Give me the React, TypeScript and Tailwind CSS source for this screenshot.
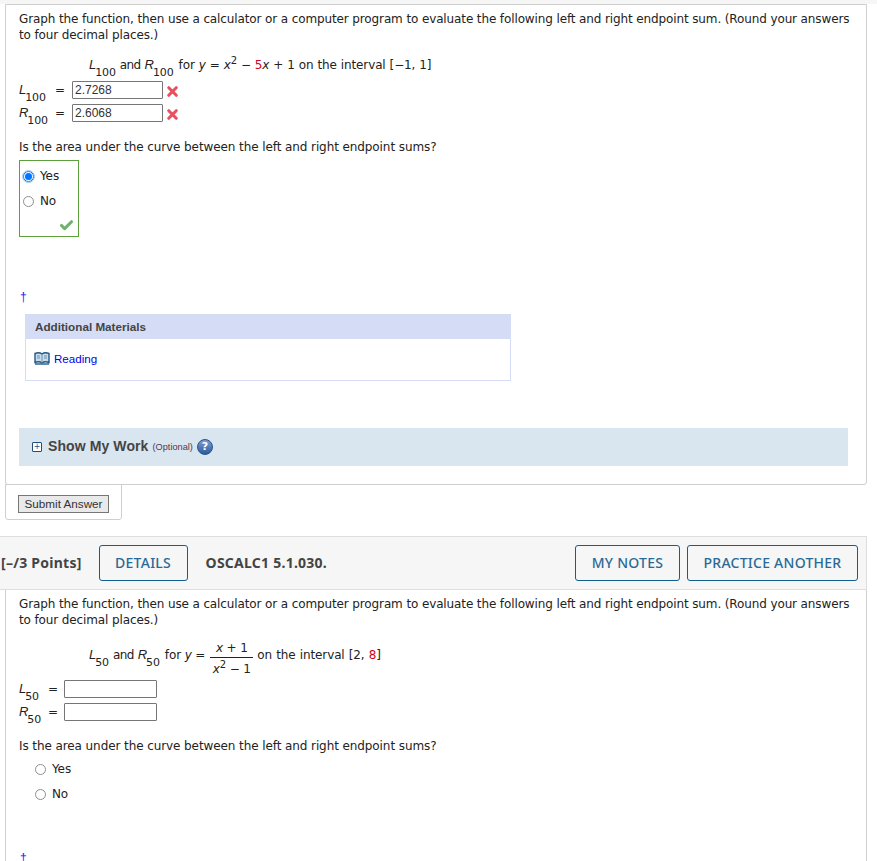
import { Check, X } from "lucide-react"

const body = "font-['DejaVu_Sans',sans-serif] text-[12px] tracking-[-0.12px]"

function Sub({ base, sub }: { base: string; sub: string }) {
  return (
    <span className="inline-flex items-start whitespace-nowrap">
      <i className="font-['Liberation_Sans',sans-serif] text-[13px]">{base}</i>
      <span className="relative top-[11px] -ml-[1px] text-[11px] leading-[14px] tracking-[-0.1px]">{sub}</span>
    </span>
  )
}

function Radio({ checked }: { checked?: boolean }) {
  return (
    <span className={`flex w-[11px] h-[11px] rounded-full border items-center justify-center bg-white ${checked ? "border-[#0075ff] outline outline-1 outline-[#9cc6f5]" : "border-[#8f8f8f]"}`}>
      {checked && <span className="w-[7px] h-[7px] rounded-full bg-[#0075ff]" />}
    </span>
  )
}

function Intro() {
  return (
    <p className="leading-[16px]">
      Graph the function, then use a calculator or a computer program to evaluate the following left and right endpoint sum. (Round your answers
      <br />
      to four decimal places.)
    </p>
  )
}

function AnswerRow({ base, sub, value, wide, wrong }: { base: string; sub: string; value?: string; wide: boolean; wrong?: boolean }) {
  return (
    <div className="flex h-[23px] items-center">
      <span className={wide ? "w-[33px]" : "w-[26px]"}>
        <Sub base={base} sub={sub} />
      </span>
      <span className={wide ? "w-[20px] pl-[3px]" : "w-[19px] pl-[3px]"}>=</span>
      <span className={`flex h-[18px] items-center border border-[#767676] rounded-[1px] bg-white pl-[2px] font-['Liberation_Sans',sans-serif] text-[12px] tracking-normal text-[#333] ${wide ? "w-[91px]" : "w-[93px]"}`}>
        {value}
      </span>
      {wrong && <X size={15} strokeWidth={5} className="ml-[2px] mt-[3px] text-[#e9505f]" />}
    </div>
  )
}

function Question({ children }: { children: React.ReactNode }) {
  return <p className="leading-[16px] tracking-[-0.09px]">{children}</p>
}

function OutlineButton({ children, width }: { children: string; width: string }) {
  return (
    <button className={`h-[36px] pb-[2px] rounded-[3px] border border-[#0f5f8f] text-[#2a6a96] font-['Noto_Sans',sans-serif] font-medium text-[14px] tracking-[0.25px] ${width}`}>
      {children}
    </button>
  )
}

export default function App() {
  return (
    <div className={`relative w-[877px] h-[861px] overflow-hidden bg-white text-[#222] ${body}`}>
      <div className="h-[4px] bg-[#f6f6f6]" />

      {/* First question */}
      <div className="ml-[5px] w-[862px] h-[481px] border border-[#cfcfcf] rounded-b-[3px] pl-[13px]">
        <div className="pt-[6px]">
          <Intro />
        </div>
        <div className="flex h-[24px] items-center mt-[10px] ml-[70px] gap-[4px] whitespace-nowrap">
          <Sub base="L" sub="100" />
          <span className="tracking-[-0.6px]">and</span>
          <Sub base="R" sub="100" />
          <span className="ml-[1px] [word-spacing:0.3px]">
            for <i>y</i> = <i>x</i><sup className="text-[10px] -top-[5px]">2</sup> − <span className="text-[#d0021b]">5</span><i>x</i> + 1 on the interval [−1, 1]
          </span>
        </div>
        <div className="mt-[1px]">
          <AnswerRow base="L" sub="100" value="2.7268" wide wrong />
          <AnswerRow base="R" sub="100" value="2.6068" wide wrong />
        </div>
        <div className="mt-[15px]">
          <Question>Is the area under the curve between the left and right endpoint sums?</Question>
        </div>
        <div className="relative mt-[5px] w-[60px] h-[77px] border border-[#5c9f3c] pl-[3px] pt-[7px]">
          <label className="flex h-[16px] items-center gap-[6px]"><Radio checked />Yes</label>
          <label className="flex h-[16px] mt-[9px] items-center gap-[6px]"><Radio />No</label>
          <Check size={15} strokeWidth={5} className="absolute right-[4px] bottom-[3px] text-[#6db36b]" />
        </div>
        <div className="mt-[52px] ml-[1px] h-[16px] leading-[16px] font-['Liberation_Sans',sans-serif] text-[#1a1aff]">†</div>

        {/* Additional materials */}
        <div className="mt-[9px] ml-[6px] w-[486px] h-[67px] border border-[#d5ddf6]">
          <div className="flex h-[24px] items-center bg-[#d5ddf6] pl-[9px] font-['Liberation_Sans',sans-serif] font-bold text-[11.7px] tracking-normal text-[#444]">
            Additional Materials
          </div>
          <div className="flex items-center mt-[11px] pl-[8px] gap-[4px] font-['Liberation_Sans',sans-serif] text-[11.6px] tracking-normal text-[#0000e6]">
            <svg width="16" height="13" viewBox="0 0 16 13">
              <path d="M1 1.500c2.500-1 5-1 7 .5 2-1.500 4.500-1.500 7-.5v9c-2.500-1-5-1-7 .5-2-1.500-4.500-1.500-7-.5z" fill="#c9dbe8" stroke="#1f5a88" strokeWidth="1.400" />
              <path d="M8 2v9M3 4h3M3 6h3M10 4h3M10 6h3" stroke="#6f93ad" strokeWidth="1" />
              <path d="M1 12h14" stroke="#1f5a88" strokeWidth="1.400" />
            </svg>
            Reading
          </div>
        </div>

        {/* Show my work */}
        <div className="flex items-center mt-[47px] w-[829px] h-[38px] bg-[#d9e5ef] pl-[13px] pb-[1px]">
          <span className="flex items-center justify-center w-[10px] h-[10px] border border-[#1f4f80] rounded-[1px] bg-white text-[8px] leading-none text-[#1f4f80]">+</span>
          <span className="ml-[6px] font-['Liberation_Sans',sans-serif] font-bold text-[14px] tracking-[0.1px] text-[#444]">Show My Work</span>
          <span className="ml-[4px] font-['Liberation_Sans',sans-serif] text-[9.200px] tracking-normal text-[#553355] mt-[2px]">(Optional)</span>
          <span className="ml-[4px] flex items-center justify-center w-[16px] h-[16px] rounded-full bg-gradient-to-b from-[#7d9fd0] to-[#2c5a9e] border border-[#2a4f8a] text-white text-[11px] font-bold leading-none tracking-normal">?</span>
        </div>
      </div>

      {/* Submit tab */}
      <div className="ml-[5px] w-[117px] h-[36px] -mt-[1px] border border-[#cfcfcf] rounded-b-[3px] pl-[12px] pt-[10px]">
        <button className="block w-[91px] h-[18px] border border-[#767676] bg-[#e9e9e9] font-['Liberation_Sans',sans-serif] text-[11.700px] leading-none tracking-normal text-[#333]">
          Submit Answer
        </button>
      </div>

      {/* Second question header */}
      <div className="mt-[16px] flex items-center w-[867px] h-[54px] bg-[#f6f6f6] border-y border-[#dedede] border-r font-['Noto_Sans',sans-serif] tracking-[0.25px]">
        <span className="ml-[1px] mb-[2px] font-bold text-[14px] text-[#444]">[–/3 Points]</span>
        <div className="ml-[17px]"><OutlineButton width="w-[89px]">DETAILS</OutlineButton></div>
        <span className="ml-[18px] mb-[2px] font-bold text-[14px] text-[#444]">OSCALC1 5.1.030.</span>
        <div className="ml-auto flex gap-[7px] mr-[8px]">
          <OutlineButton width="w-[105px]">MY NOTES</OutlineButton>
          <OutlineButton width="w-[171px]">PRACTICE ANOTHER</OutlineButton>
        </div>
      </div>

      {/* Second question */}
      <div className="ml-[5px] w-[862px] border-x border-[#cfcfcf] pl-[13px] h-[300px]">
        <div className="pt-[6px]">
          <Intro />
        </div>
        <div className="flex h-[36px] items-center mt-[9px] ml-[70px] gap-[4px] whitespace-nowrap">
          <Sub base="L" sub="50" />
          <span className="tracking-[-0.6px]">and</span>
          <Sub base="R" sub="50" />
          <span className="ml-[1px]">for <i>y</i> =</span>
          <span className="flex flex-col items-center mt-[8px] ml-[1px]">
            <span className="px-[5px] leading-[15px] pb-[1px]"><i>x</i> + 1</span>
            <span className="px-[2.500px] pt-[3px] border-t border-[#222] leading-[16px]"><i>x</i><sup className="text-[10px] -top-[5px]">2</sup> − 1</span>
          </span>
          <span className="[word-spacing:0.5px]">on the interval [2, <span className="text-[#d0021b]">8</span>]</span>
        </div>
        <div className="mt-[4px]">
          <AnswerRow base="L" sub="50" wide={false} />
          <AnswerRow base="R" sub="50" wide={false} />
        </div>
        <div className="mt-[15px]">
          <Question>Is the area under the curve between the left and right endpoint sums?</Question>
        </div>
        <div className="mt-[7px] pl-[16px]">
          <label className="flex h-[16px] items-center gap-[6px]"><Radio />Yes</label>
          <label className="flex h-[16px] mt-[9px] items-center gap-[6px]"><Radio />No</label>
        </div>
        <div className="mt-[48px] ml-[1px] h-[16px] leading-[16px] font-['Liberation_Sans',sans-serif] text-[#1a1aff]">†</div>
      </div>
    </div>
  )
}
